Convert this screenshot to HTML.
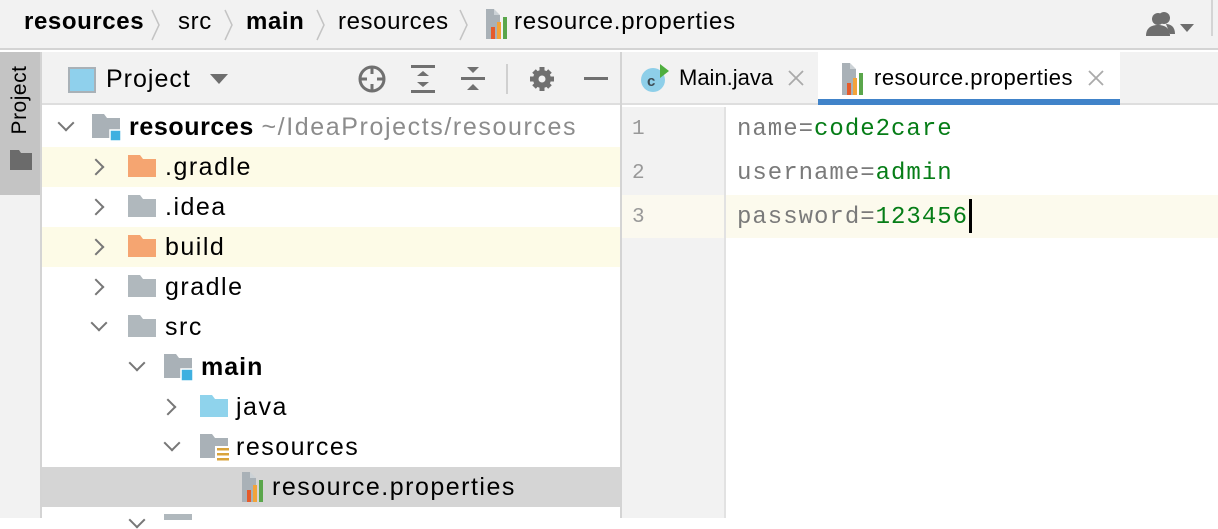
<!DOCTYPE html>
<html><head><meta charset="utf-8"><style>
*{margin:0;padding:0;box-sizing:border-box}
body{width:1218px;height:518px;overflow:hidden;background:#fff;font-family:"Liberation Sans",sans-serif;position:relative;color:#000}
.a{position:absolute}
.t{position:absolute;font-size:25px;letter-spacing:1.5px;line-height:40px;white-space:nowrap}
.chev{position:absolute;width:12px;height:12px;border-right:2px solid #777;border-bottom:2px solid #777}
.r{transform:rotate(-45deg)}
.d{transform:rotate(45deg)}
.mono{font-family:"Liberation Mono",monospace;font-size:24px;letter-spacing:1px;position:absolute;white-space:nowrap;line-height:44px}
.num{font-family:"Liberation Mono",monospace;font-size:21px;position:absolute;white-space:nowrap;line-height:44px;color:#999}
</style></head><body>
<!-- breadcrumb -->
<div class="a" style="left:0;top:0;width:1218px;height:50px;background:#f2f2f2;border-bottom:2px solid #d4d4d4"></div>
<div class="t" style="left:24px;top:2px;font-weight:bold;font-size:24px;letter-spacing:0.6px">resources</div>
<div class="t" style="left:178px;top:2px;font-size:24px;letter-spacing:0.6px">src</div>
<div class="t" style="left:246px;top:2px;font-weight:bold;font-size:24px;letter-spacing:0.6px">main</div>
<div class="t" style="left:338px;top:2px;font-size:24px;letter-spacing:0.6px">resources</div>
<div class="t" style="left:514px;top:2px;font-size:24px;letter-spacing:0.8px">resource.properties</div>
<svg class="a" style="left:150px;top:8px" width="340" height="34">
<g fill="none" stroke="#c4c4c4" stroke-width="1.5"><path d="M2 2 L9 17 L2 32"/><path d="M75 2 L82 17 L75 32"/><path d="M167 2 L174 17 L167 32"/><path d="M310 2 L317 17 L310 32"/></g></svg>
<svg class="a" style="left:482px;top:9px" width="28" height="30"><path d="M4 0h8v6h6v24H4z" fill="#a9b1b7"/><path d="M12 0l6 6h-6z" fill="#ccd2d6"/><rect x="9" y="18" width="4" height="12" fill="#e55b2b"/><rect x="15" y="13" width="4" height="17" fill="#f2a33a"/><rect x="21" y="8" width="4" height="22" fill="#5aa64b"/></svg>
<svg class="a" style="left:1146px;top:10px" width="52" height="30"><circle cx="18" cy="8" r="6" fill="#6e6e6e"/><circle cx="12" cy="9" r="6" fill="#6e6e6e"/><path d="M0 26c0-8 5-11 12-11s12 3 12 11z" fill="#6e6e6e"/><path d="M20 14c5 0 9 3 9 10h-5z" fill="#6e6e6e"/><path d="M34 14h14l-7 8z" fill="#6e6e6e"/></svg>
<div class="a" style="left:1211px;top:0;width:2px;height:36px;background:#d4d4d4"></div>

<!-- left stripe -->
<div class="a" style="left:0;top:52px;width:40px;height:466px;background:#f2f2f2"></div>
<div class="a" style="left:0;top:52px;width:40px;height:143px;background:#c4c4c4"></div>
<div class="a" style="left:0;top:60px;width:40px;height:80px;"><div style="position:absolute;left:-20px;top:28px;width:80px;transform:rotate(-90deg);font-size:21px;letter-spacing:0.5px;text-align:center">Project</div></div>
<svg class="a" style="left:10px;top:150px" width="22" height="20"><path d="M0 0h9l2 3h11v17H0z" fill="#6b6b6b"/></svg>
<div class="a" style="left:40px;top:52px;width:2px;height:466px;background:#d4d4d4"></div>

<!-- project header -->
<div class="a" style="left:42px;top:52px;width:578px;height:53px;background:#f2f2f2;border-bottom:2px solid #dedede"></div>
<div class="a" style="left:68px;top:67px;width:28px;height:26px;border:2px solid #a9b1b7;background:#8fd0ec"></div>
<div class="t" style="left:106px;top:59px;letter-spacing:1px">Project</div>
<svg class="a" style="left:210px;top:74px" width="20" height="12"><path d="M0 0h18l-9 10z" fill="#6e6e6e"/></svg>
<svg class="a" style="left:356px;top:62px" width="260" height="34"><g fill="none" stroke="#707070" stroke-width="3"><circle cx="16" cy="17" r="12"/><path d="M16 4v8M16 22v8M3 17h8M21 17h8"/></g>
<g fill="#707070"><rect x="55" y="3" width="24" height="3"/><rect x="55" y="28" width="24" height="3"/><path d="M61 14l6-5 6 5z"/><path d="M61 20l6 5 6-5z"/>
<rect x="105" y="15" width="24" height="3"/><path d="M111 5l6 6 6-6z"/><path d="M111 28l6-6 6 6z"/>
<rect x="150" y="2" width="2" height="30" fill="#d0d0d0"/>
<circle cx="186" cy="17" r="9"/><g stroke="#707070" stroke-width="5"><path d="M186 5v24M174 17h24M178 9l16 16M194 9l-16 16"/></g><circle cx="186" cy="17" r="3.5" fill="#f2f2f2"/>
<rect x="228" y="15" width="24" height="3"/></g></svg>
<div class="a" style="left:620px;top:52px;width:2px;height:466px;background:#d4d4d4"></div>

<!-- tree rows -->
<div class="a" style="left:42px;top:147px;width:578px;height:40px;background:#fdfbe7"></div>
<div class="a" style="left:42px;top:227px;width:578px;height:40px;background:#fdfbe7"></div>
<div class="a" style="left:42px;top:467px;width:578px;height:40px;background:#d5d5d5"></div>

<div class="chev d" style="left:60px;top:117px"></div>
<svg class="a" style="left:92px;top:114px" width="32" height="28"><path d="M0 0h12l3 4h13v20H0z" fill="#a9b1b7"/><rect x="18" y="16" width="11" height="11" fill="#3fb0e0" stroke="#fff" stroke-width="1.5"/></svg>
<div class="t" style="left:129px;top:107px;font-weight:bold;letter-spacing:0.6px">resources <span style="font-weight:normal;color:#8c8c8c;letter-spacing:1.6px">~/IdeaProjects/resources</span></div>

<div class="chev r" style="left:90px;top:161px"></div>
<svg class="a" style="left:128px;top:155px" width="30" height="24"><path d="M0 0h12l3 4h13v18H0z" fill="#f5a571"/></svg>
<div class="t" style="left:165px;top:147px">.gradle</div>
<div class="chev r" style="left:90px;top:201px"></div>
<svg class="a" style="left:128px;top:195px" width="30" height="24"><path d="M0 0h12l3 4h13v18H0z" fill="#b0b8bd"/></svg>
<div class="t" style="left:165px;top:187px">.idea</div>
<div class="chev r" style="left:90px;top:241px"></div>
<svg class="a" style="left:128px;top:235px" width="30" height="24"><path d="M0 0h12l3 4h13v18H0z" fill="#f5a571"/></svg>
<div class="t" style="left:165px;top:227px">build</div>
<div class="chev r" style="left:90px;top:281px"></div>
<svg class="a" style="left:128px;top:275px" width="30" height="24"><path d="M0 0h12l3 4h13v18H0z" fill="#b0b8bd"/></svg>
<div class="t" style="left:165px;top:267px">gradle</div>
<div class="chev d" style="left:93px;top:317px"></div>
<svg class="a" style="left:128px;top:315px" width="30" height="24"><path d="M0 0h12l3 4h13v18H0z" fill="#b0b8bd"/></svg>
<div class="t" style="left:165px;top:307px">src</div>

<div class="chev d" style="left:131px;top:357px"></div>
<svg class="a" style="left:164px;top:354px" width="32" height="28"><path d="M0 0h12l3 4h13v20H0z" fill="#a9b1b7"/><rect x="17" y="15" width="12" height="12" fill="#3fb0e0" stroke="#fff" stroke-width="1.5"/></svg>
<div class="t" style="left:201px;top:347px;font-weight:bold;letter-spacing:1px">main</div>

<div class="chev r" style="left:162px;top:401px"></div>
<svg class="a" style="left:200px;top:395px" width="30" height="24"><path d="M0 0h12l3 4h13v18H0z" fill="#8fd3ec"/></svg>
<div class="t" style="left:236px;top:387px">java</div>
<div class="chev d" style="left:166px;top:437px"></div>
<svg class="a" style="left:200px;top:434px" width="32" height="30"><path d="M0 0h12l3 4h13v20H0z" fill="#a9b1b7"/><rect x="15" y="12" width="14" height="16" fill="#fff"/><g fill="#d9a33b"><rect x="17" y="14" width="12" height="2.5"/><rect x="17" y="19" width="12" height="2.5"/><rect x="17" y="24" width="12" height="2.5"/></g></svg>
<div class="t" style="left:236px;top:427px">resources</div>

<svg class="a" style="left:238px;top:472px" width="30" height="30"><path d="M4 0h8v6h6v24H4z" fill="#a9b1b7"/><path d="M12 0l6 6h-6z" fill="#ccd2d6"/><rect x="9" y="18" width="4" height="12" fill="#e55b2b"/><rect x="15" y="13" width="4" height="17" fill="#f2a33a"/><rect x="21" y="8" width="4" height="22" fill="#5aa64b"/></svg>
<div class="t" style="left:272px;top:467px">resource.properties</div>
<div class="chev d" style="left:131px;top:514px"></div>
<svg class="a" style="left:164px;top:514px" width="30" height="6"><rect width="28" height="6" fill="#b0b8bd"/></svg>

<!-- editor tabs -->
<div class="a" style="left:622px;top:52px;width:596px;height:53px;background:#f2f2f2;border-bottom:2px solid #dedede"></div>
<div class="a" style="left:818px;top:52px;width:302px;height:48px;background:#fff"></div>
<div class="a" style="left:818px;top:99px;width:302px;height:6px;background:#4083c9"></div>
<svg class="a" style="left:639px;top:62px" width="32" height="32"><circle cx="14" cy="18" r="12" fill="#8ecfe9"/><text x="8" y="24" font-family="Liberation Sans" font-size="15" font-weight="bold" fill="#3c4a52">c</text><path d="M21 2l9 7-9 7z" fill="#4fae3f"/></svg>
<div class="t" style="left:679px;top:58px;font-size:22px;letter-spacing:0">Main.java</div>
<svg class="a" style="left:788px;top:70px" width="16" height="16"><path d="M1 1l14 14M15 1L1 15" stroke="#aaa" stroke-width="1.8"/></svg>
<svg class="a" style="left:838px;top:63px" width="28" height="32"><path d="M4 0h8v6h6v26H4z" fill="#a9b1b7"/><path d="M12 0l6 6h-6z" fill="#ccd2d6"/><rect x="9" y="20" width="4" height="12" fill="#e55b2b"/><rect x="15" y="15" width="4" height="17" fill="#f2a33a"/><rect x="21" y="10" width="4" height="22" fill="#5aa64b"/></svg>
<div class="t" style="left:874px;top:58px;font-size:22px;letter-spacing:0.5px">resource.properties</div>
<svg class="a" style="left:1088px;top:70px" width="16" height="16"><path d="M1 1l14 14M15 1L1 15" stroke="#aaa" stroke-width="1.8"/></svg>

<!-- editor -->
<div class="a" style="left:622px;top:107px;width:102px;height:411px;background:#f2f2f2"></div>
<div class="a" style="left:724px;top:107px;width:2px;height:411px;background:#e2e2e2"></div>
<div class="a" style="left:622px;top:195px;width:102px;height:43px;background:#fbf9ef"></div>
<div class="a" style="left:726px;top:195px;width:492px;height:43px;background:#fcfaed"></div>
<div class="num" style="left:632px;top:108px">1</div>
<div class="num" style="left:632px;top:152px">2</div>
<div class="num" style="left:632px;top:196px">3</div>
<div class="mono" style="left:737px;top:108px;color:#7a7a7a">name=<span style="color:#067d17">code2care</span></div>
<div class="mono" style="left:737px;top:152px;color:#7a7a7a">username=<span style="color:#067d17">admin</span></div>
<div class="mono" style="left:737px;top:196px;color:#7a7a7a">password=<span style="color:#067d17">123456</span></div>
<div class="a" style="left:969px;top:199px;width:3px;height:34px;background:#000"></div>
</body></html>
